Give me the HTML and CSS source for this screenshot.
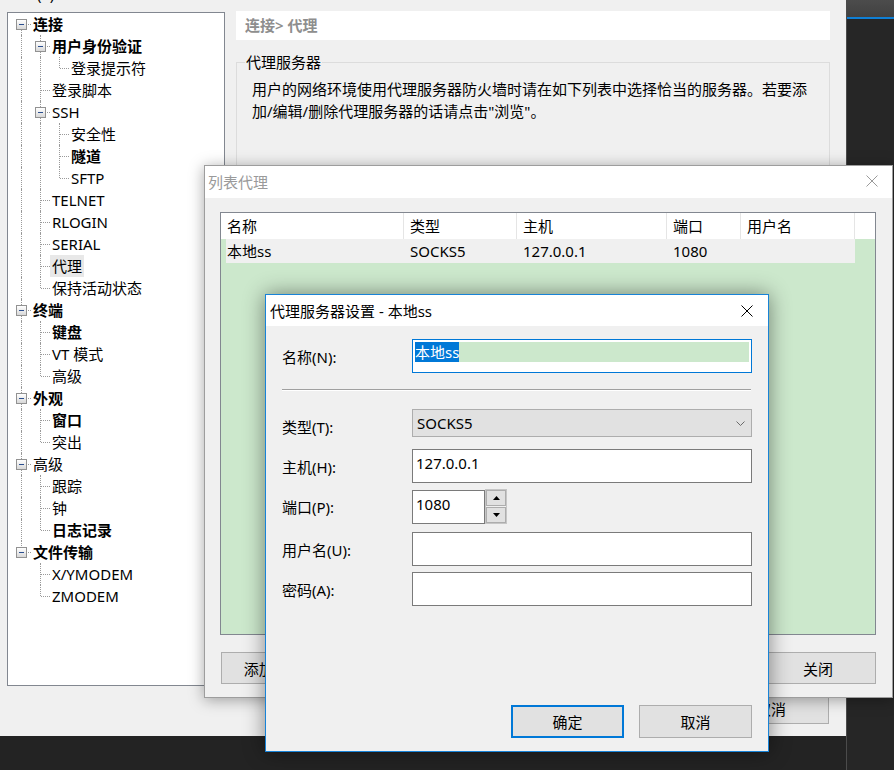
FILE: index.html
```html
<!DOCTYPE html>
<html lang="zh-CN">
<head>
  <meta charset="UTF-8">
  <meta name="viewport" content="width=device-width, initial-scale=1.0">
  <title>会话属性</title>
  <link rel="stylesheet" href="styles.css">
</head>
<body>
  <div class="desktop">
    <div class="main-window">
      <div class="menu-cut">(S)</div>

      <div class="main-body">
        <!-- category tree -->
        <div class="tree">
          <div class="node"><i class="g x first"><b></b></i><span class="lbl bold">连接</span></div>
          <div class="node"><i class="g v"></i><i class="g x"><b></b></i><span class="lbl bold">用户身份验证</span></div>
          <div class="node"><i class="g v"></i><i class="g v"></i><i class="g l"></i><span class="lbl">登录提示符</span></div>
          <div class="node"><i class="g v"></i><i class="g t"></i><span class="lbl">登录脚本</span></div>
          <div class="node"><i class="g v"></i><i class="g x"><b></b></i><span class="lbl">SSH</span></div>
          <div class="node"><i class="g v"></i><i class="g v"></i><i class="g t"></i><span class="lbl">安全性</span></div>
          <div class="node"><i class="g v"></i><i class="g v"></i><i class="g t"></i><span class="lbl bold">隧道</span></div>
          <div class="node"><i class="g v"></i><i class="g v"></i><i class="g l"></i><span class="lbl">SFTP</span></div>
          <div class="node"><i class="g v"></i><i class="g t"></i><span class="lbl">TELNET</span></div>
          <div class="node"><i class="g v"></i><i class="g t"></i><span class="lbl">RLOGIN</span></div>
          <div class="node"><i class="g v"></i><i class="g t"></i><span class="lbl">SERIAL</span></div>
          <div class="node"><i class="g v"></i><i class="g t"></i><span class="lbl selected">代理</span></div>
          <div class="node"><i class="g v"></i><i class="g l"></i><span class="lbl">保持活动状态</span></div>
          <div class="node"><i class="g x"><b></b></i><span class="lbl bold">终端</span></div>
          <div class="node"><i class="g v"></i><i class="g t"></i><span class="lbl bold">键盘</span></div>
          <div class="node"><i class="g v"></i><i class="g t"></i><span class="lbl">VT 模式</span></div>
          <div class="node"><i class="g v"></i><i class="g l"></i><span class="lbl">高级</span></div>
          <div class="node"><i class="g x"><b></b></i><span class="lbl bold">外观</span></div>
          <div class="node"><i class="g v"></i><i class="g t"></i><span class="lbl bold">窗口</span></div>
          <div class="node"><i class="g v"></i><i class="g l"></i><span class="lbl">突出</span></div>
          <div class="node"><i class="g x"><b></b></i><span class="lbl">高级</span></div>
          <div class="node"><i class="g v"></i><i class="g t"></i><span class="lbl">跟踪</span></div>
          <div class="node"><i class="g v"></i><i class="g t"></i><span class="lbl">钟</span></div>
          <div class="node"><i class="g v"></i><i class="g l"></i><span class="lbl bold">日志记录</span></div>
          <div class="node"><i class="g x last"><b></b></i><span class="lbl bold">文件传输</span></div>
          <div class="node"><i class="g"></i><i class="g t"></i><span class="lbl">X/YMODEM</span></div>
          <div class="node"><i class="g"></i><i class="g l"></i><span class="lbl">ZMODEM</span></div>
        </div>

        <div class="page">
          <div class="crumb">连接&gt; 代理</div>
          <fieldset class="group">
            <legend>代理服务器</legend>
            <p class="desc">用户的网络环境使用代理服务器防火墙时请在如下列表中选择恰当的服务器。若要添<br>加/编辑/删除代理服务器的话请点击"浏览"。</p>
          </fieldset>
        </div>
      </div>

      <div class="main-footer">
        <button class="btn">确定</button>
        <button class="btn">取消</button>
      </div>
    </div>

    <div class="side-strip">
      <div class="side-bar"></div>
      <div class="side-accent"></div>
    </div>
  </div>

  <!-- proxy list window -->
  <div class="dialog list-dialog">
    <div class="titlebar">
      <span class="title">列表代理</span>
      <svg class="close" viewBox="0 0 12 12"><path d="M0.5 0.5L11.5 11.5M11.5 0.5L0.5 11.5" stroke="currentColor" stroke-width="1" fill="none"/></svg>
    </div>
    <div class="list-body">
      <div class="listview">
        <div class="lv-head">
          <span class="c1">名称</span>
          <span class="c2">类型</span>
          <span class="c3">主机</span>
          <span class="c4">端口</span>
          <span class="c5">用户名</span>
        </div>
        <div class="lv-row">
          <span class="c1">本地ss</span>
          <span class="c2">SOCKS5</span>
          <span class="c3">127.0.0.1</span>
          <span class="c4">1080</span>
          <span class="c5"></span>
        </div>
      </div>
      <div class="list-buttons">
        <button class="btn add-btn">添加(A)...</button>
        <button class="btn">编辑(E)...</button>
        <button class="btn">删除(D)</button>
        <button class="btn close-btn">关闭</button>
      </div>
    </div>
  </div>

  <!-- proxy settings window -->
  <div class="dialog edit-dialog">
    <div class="titlebar">
      <span class="title">代理服务器设置 - 本地ss</span>
      <svg class="close" viewBox="0 0 12 12"><path d="M0.5 0.5L11.5 11.5M11.5 0.5L0.5 11.5" stroke="currentColor" stroke-width="1" fill="none"/></svg>
    </div>
    <div class="edit-body">
      <div class="form">
        <div class="frow">
          <label>名称(N):</label>
          <div class="edit focus"><div class="sel-line"><span class="sel">本地ss</span></div></div>
        </div>
        <div class="sep"></div>
        <div class="frow r-type">
          <label>类型(T):</label>
          <div class="combo">
            <span>SOCKS5</span>
            <svg width="9" height="5" viewBox="0 0 9 5"><path d="M0.5 0.5L4.5 4.5L8.5 0.5" fill="none" stroke="#6a6a6a"/></svg>
          </div>
        </div>
        <div class="frow r-host">
          <label>主机(H):</label>
          <div class="edit">127.0.0.1</div>
        </div>
        <div class="frow r-port">
          <label>端口(P):</label>
          <div class="edit port">1080</div>
          <div class="spin">
            <span class="spin-btn"><svg width="7" height="4" viewBox="0 0 7 4"><path d="M0 4L3.5 0L7 4Z"/></svg></span>
            <span class="spin-btn"><svg width="7" height="4" viewBox="0 0 7 4"><path d="M0 0L7 0L3.5 4Z"/></svg></span>
          </div>
        </div>
        <div class="frow r-user">
          <label>用户名(U):</label>
          <div class="edit"></div>
        </div>
        <div class="frow r-pass">
          <label>密码(A):</label>
          <div class="edit"></div>
        </div>
      </div>
      <div class="edit-buttons">
        <button class="btn default">确定</button>
        <button class="btn">取消</button>
      </div>
    </div>
  </div>
</body>
</html>
```

FILE: styles.css
```css
* {
  box-sizing: border-box;
}

body {
  margin: 0;
  background: #232323;
  font-family: "Noto Sans", "Noto Sans CJK SC", sans-serif;
  font-size: 15px;
  color: #000;
  overflow: hidden;
}

.btn {
  width: 116px;
  height: 32px;
  padding: 0;
  font: inherit;
  color: #000;
  background: #e1e1e1;
  border: 1px solid #adadad;
}

/* Main session window */
.desktop {
  display: flex;
  height: 770px;
}

.main-window {
  width: 846px;
  height: 736px;
  padding-bottom: 12px;
  background: #f0f0f0;
  display: flex;
  flex-direction: column;
}

.menu-cut {
  height: 28px;
  margin-top: -17px;
  padding-left: 37px;
  line-height: 22px;
  white-space: nowrap;
}

.main-body {
  display: flex;
  gap: 11px;
  height: 675px;
  padding: 0 16px 0 7px;
}

.main-footer {
  display: flex;
  justify-content: flex-end;
  gap: 8px;
  margin-top: 6px;
  padding-right: 17px;
}

.side-strip {
  flex: 1;
  background: #262626;
  border-left: 1px solid #4b4b4b;
}

.side-bar {
  height: 17px;
  background: linear-gradient(#4c4c4c, #414141);
}

.side-accent {
  height: 2px;
  background: #0f7fd5;
}

/* Tree view */
.tree {
  width: 218px;
  margin-top: 1px;
  padding-left: 4px;
  background: #fff;
  border: 1px solid #828790;
}

.node {
  display: flex;
  height: 22px;
  line-height: 22px;
  white-space: nowrap;
}

.g {
  position: relative;
  flex: none;
  width: 19px;
  height: 22px;
}

.g.v::before,
.g.t::before,
.g.l::before,
.g.x::before {
  content: "";
  position: absolute;
  left: 9px;
  top: 0;
  bottom: 0;
  border-left: 1px dotted #9a9a9a;
}

.g.l::before,
.g.x.last::before {
  bottom: 11px;
}

.g.x.first::before {
  top: 11px;
}

.g.t::after,
.g.l::after,
.g.x::after {
  content: "";
  position: absolute;
  left: 10px;
  top: 11px;
  width: 9px;
  border-top: 1px dotted #9a9a9a;
}

.g.x b {
  position: absolute;
  z-index: 1;
  left: 4px;
  top: 6px;
  width: 11px;
  height: 11px;
  border: 1px solid #929292;
  background: linear-gradient(#ffffff, #d8d8d8);
}

.g.x b::after {
  content: "";
  position: absolute;
  left: 2px;
  right: 2px;
  top: 4px;
  height: 1px;
  background: #2c4f8f;
}

.lbl {
  padding: 0 2px;
}

.lbl.bold {
  font-weight: bold;
}

.lbl.selected {
  background: #e8e8e8;
}

/* Right page */
.page {
  width: 594px;
  display: flex;
  flex-direction: column;
}

.crumb {
  height: 29px;
  padding-left: 9px;
  line-height: 29px;
  background: #fff;
  color: #8e8e8e;
  font-weight: 600;
}

.group {
  flex: 1;
  margin: 12px 0 0;
  padding: 0 8px;
  border: 1px solid #dcdcdc;
  min-width: 0;
}

.group legend {
  padding: 0 1px;
  line-height: 20px;
}

.desc {
  margin: 6px 0 0 7px;
  line-height: 22px;
}

/* Floating dialogs */
.dialog {
  position: absolute;
  display: flex;
  flex-direction: column;
  background: #f0f0f0;
}

.titlebar {
  flex: none;
  display: flex;
  align-items: center;
  justify-content: space-between;
  background: #fff;
  white-space: nowrap;
}

.close {
  width: 12px;
  height: 12px;
}

.list-dialog {
  left: 204px;
  top: 165px;
  width: 689px;
  height: 533px;
  border: 1px solid #9d9d9d;
  box-shadow: 0 2px 14px rgba(0, 0, 0, 0.35);
}

.list-dialog .titlebar {
  height: 32px;
  padding: 0 14px 2px 3px;
  color: #9a9a9a;
}

.list-body {
  padding: 14px 15px 0;
}

.listview {
  width: 656px;
  height: 423px;
  background: #cce8cc;
  border: 1px solid #828790;
}

.lv-head {
  display: flex;
  height: 26px;
  line-height: 26px;
  background: #fff;
}

.lv-head span {
  padding-left: 6px;
  border-right: 1px solid #e5e5e5;
}

.lv-row {
  display: flex;
  width: 629px;
  height: 24px;
  margin-left: 5px;
  line-height: 24px;
  background: #f0f0f0;
}

.lv-row span {
  padding-left: 6px;
}

.c1 { width: 183px; }
.c2 { width: 113px; }
.c3 { width: 150px; }
.c4 { width: 74px; }
.c5 { width: 114px; }

.lv-row .c1 {
  width: 178px;
  padding-left: 1px;
}

.list-buttons {
  display: flex;
  gap: 8px;
  margin: 17px 1px 0;
}

.list-buttons .add-btn {
  padding-right: 10px;
}

.list-buttons .close-btn {
  margin-left: auto;
}

.edit-dialog {
  left: 265px;
  top: 294px;
  width: 504px;
  height: 458px;
  border: 1px solid #1883d7;
  box-shadow: 0 0 20px rgba(0, 0, 0, 0.45);
}

.edit-dialog .titlebar {
  height: 31px;
  padding: 0 15px 0 4px;
}

.edit-body {
  flex: 1;
  display: flex;
  flex-direction: column;
  justify-content: space-between;
  padding: 13px 16px 13px 16px;
}

.frow {
  display: flex;
  align-items: center;
}

.frow label {
  width: 130px;
}

.edit {
  width: 340px;
  height: 34px;
  padding: 2px 3px;
  line-height: 22px;
  background: #fff;
  border: 1px solid #7a7a7a;
}

.edit.focus {
  padding: 2px;
  border-color: #0078d7;
}

.sel-line {
  height: 20px;
  line-height: 20px;
  background: #cce8cc;
}

.sel {
  display: inline-block;
  background: #0078d7;
  color: #fff;
}

.sep {
  width: 469px;
  height: 2px;
  margin-top: 16px;
  border-top: 1px solid #a0a0a0;
  border-bottom: 1px solid #fff;
}

.r-type {
  margin-top: 18px;
}

.r-type label {
  padding-top: 6px;
}

.combo {
  width: 340px;
  height: 28px;
  display: flex;
  align-items: center;
  justify-content: space-between;
  padding: 0 6px 0 4px;
  background: #e1e1e1;
  border: 1px solid #adadad;
}

.r-host {
  margin-top: 12px;
}

.r-port {
  margin-top: 6px;
}

.edit.port {
  width: 73px;
}

.spin {
  display: flex;
  flex-direction: column;
  gap: 1px;
  width: 22px;
  height: 35px;
  border: 1px solid #c6c6c6;
}

.spin-btn {
  display: flex;
  align-items: center;
  justify-content: center;
  height: 16px;
  background: #e1e1e1;
  border: 1px solid #adadad;
}

.r-user {
  margin-top: 8px;
}

.r-pass {
  margin-top: 6px;
}

.edit-buttons {
  display: flex;
  justify-content: flex-end;
  gap: 15px;
}

.edit-buttons .btn {
  width: 113px;
  height: 33px;
}

.edit-buttons .default {
  border: 2px solid #0078d7;
}
```
